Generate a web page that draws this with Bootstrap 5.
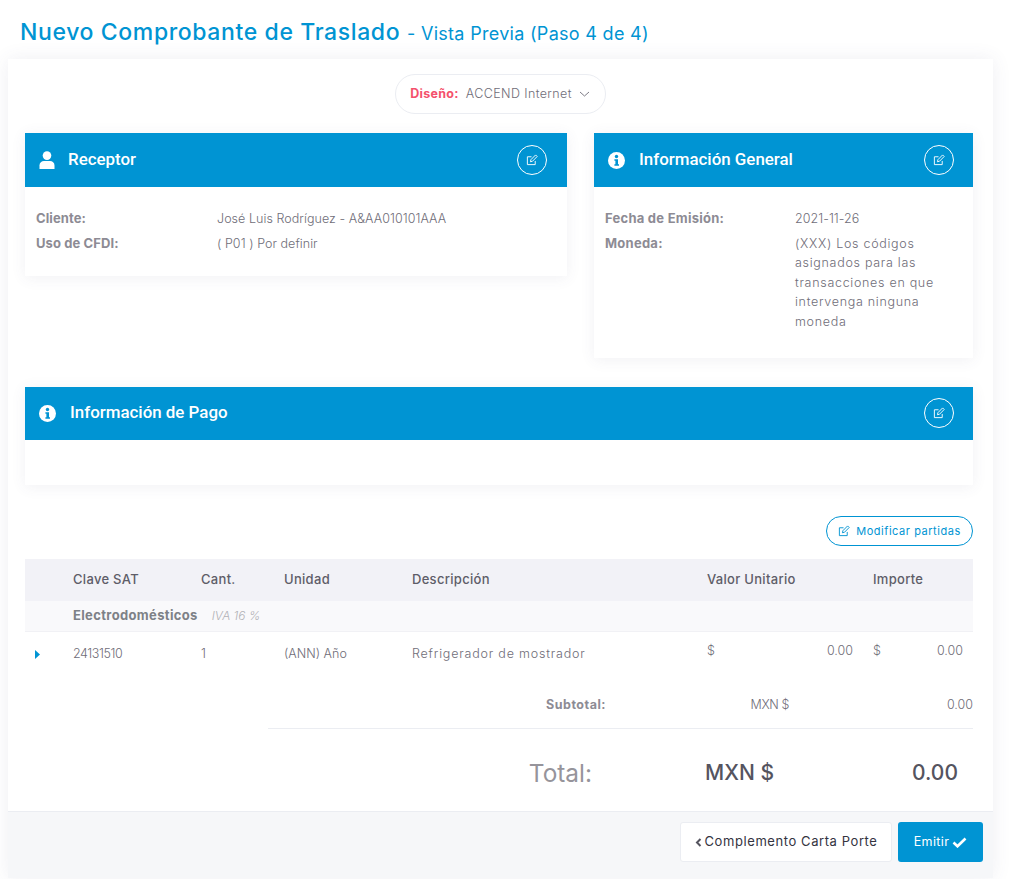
<!DOCTYPE html>
<html lang="es">
<head>
<meta charset="utf-8">
<title>Nuevo Comprobante de Traslado</title>
<link href="https://cdn.jsdelivr.net/npm/bootstrap@5.3.0/dist/css/bootstrap.min.css" rel="stylesheet">
<style>
html,body{height:879px;overflow:hidden}
body{background:#fff;font-family:"Inter","Open Sans",sans-serif;font-size:12.5px;color:#6f6d78;font-weight:300}
.page-head{margin:0;padding:17px 20px 12px;height:59px;font-size:23px;line-height:30px;font-weight:500;color:#0094d3;white-space:nowrap;letter-spacing:.62px}
.page-head small{font-size:18px;font-weight:400;letter-spacing:.3px}
.sheet{margin-left:8px;width:985px;height:819px;background:#fff;box-shadow:0 0 18px rgba(80,80,120,.09);border:0;border-radius:0;display:flex;flex-direction:column}
.sheet-main{padding:15px 20px 0 17px;flex:1 1 auto}
.pill-wrap{height:59px;padding-left:2px}
.design-pill{width:211px;height:40px;border:1px solid #ebedf2;border-radius:20px;color:#6f6d78;font-size:12.5px;gap:7px;background:#fff;letter-spacing:.4px}
.design-pill b{color:#f4516c;font-weight:700;letter-spacing:.3px}
.panel-row{gap:27px;margin-bottom:29px}
.panel{border:0;border-radius:0;box-shadow:0 2px 14px rgba(80,80,120,.08);background:#fff}
.panel-a{width:542px;height:143px}
.panel-b{width:379px;height:225px}
.panel-c{width:948px;height:98px}
.panel-head{background:#0094d3;color:#fff;border:0;border-radius:0!important;height:54px;padding:0 19px 0 14px;font-family:Roboto,sans-serif;font-size:16.9px;font-weight:500}
.panel-a .panel-head{padding-right:20px}
.panel-c .panel-head{height:53px;padding-bottom:1px}
.head-ico{margin-right:14px;flex:none}
.panel-a .head-ico{margin-right:13px}
.round-edit{width:30px;height:30px;border:1px solid #fff;border-radius:50%;padding:0;color:#fff;display:flex;align-items:center;justify-content:center}
.panel-body{padding:22px 11px 0}
.info-line{display:flex;line-height:19.5px;margin-bottom:5px;letter-spacing:.05px}
.info-line b{font-weight:700;color:#8d8b94;font-size:13px;letter-spacing:.1px}
.panel-a .info-line b{width:181px;flex:none}
.panel-b .info-line b{width:190px;flex:none}
.panel-b .info-line b{letter-spacing:.25px}
.wide-val{letter-spacing:.7px}
.tools{height:74px;padding-top:31px}
.mod-btn{width:147px;height:30px;border:1px solid #0094d3;border-radius:15px;color:#0094d3;font-size:11px;font-weight:400;padding:0;gap:6px;background:#fff;letter-spacing:.55px}
.items{table-layout:fixed;width:948px;margin:0;--bs-table-bg:transparent;color:#6f6d78;font-size:12.5px}
.items th,.items td{padding:0;border:0;vertical-align:middle}
.items thead th{background:#f2f2f7;height:42px;font-weight:500;color:#5e5d68;font-size:13px;letter-spacing:.3px}
.items .grp td{background:#f9f9fb;height:30px;border-bottom:1px solid #f1f1f5}
.grp b{font-weight:700;color:#7d8187;font-size:13px;margin-right:14px;letter-spacing:.35px}
.grp i{color:#b1b1b6;font-size:12px}
.items .item td{height:45px;color:#6f6d78;padding-top:1px;font-weight:300}
.items .item .code{letter-spacing:-.4px}
.items .item .desc{letter-spacing:.8px}
.tri{display:block;margin-left:10px}
.money{display:flex;justify-content:space-between;margin-top:-6px}
.money.val{padding-right:20px}
.money.imp{padding-right:10px}
.totals{margin-left:243px}
.sub-line{display:grid;grid-template-columns:338px 183px 184px;height:53px;padding-top:19px;border-bottom:1px solid #ebedf2;text-align:right;line-height:20px}
.sub-line b{color:#8d8b94;font-weight:700;letter-spacing:.5px}
.sub-line span:nth-child(2){letter-spacing:-.4px}
.total-line{display:grid;grid-template-columns:324px 182px 184px;padding-top:26px;text-align:right;font-size:21px;line-height:36px;font-weight:500;color:#55545f}
.total-line span:first-child{color:#96949b;font-weight:400;font-size:24.4px}
.sheet-foot{background:#f6f7f9;border-top:1px solid #ebedf2;height:67px;padding:10px 10px 0 0;gap:6px}
.back-btn{width:212px;height:40px;background:#fff;border:1px solid #ebedf2;color:#34343f;font-size:13px;font-weight:400;padding:0;gap:3px;border-radius:3px;letter-spacing:.58px}
.go-btn{width:85px;height:40px;background:#0094d3;border:0;color:#fff;font-size:12.5px;font-weight:400;padding:0;gap:3px;border-radius:3px;letter-spacing:.4px}
</style>
</head>
<body>
<h1 class="page-head">Nuevo Comprobante de Traslado <small>- Vista Previa (Paso 4 de 4)</small></h1>
<div class="card sheet">
  <div class="sheet-main">
    <div class="pill-wrap d-flex justify-content-center">
      <div class="design-pill d-flex align-items-center justify-content-center">
        <b>Diseño:</b><span>ACCEND Internet</span>
        <svg width="11" height="6" viewBox="0 0 11 6"><path d="M1 1l4.5 4L10 1" fill="none" stroke="#6f6d78" stroke-width=".9"/></svg>
      </div>
    </div>
    <div class="d-flex align-items-start panel-row">
      <div class="card panel panel-a">
        <div class="card-header panel-head d-flex align-items-center">
          <svg width="16" height="18" viewBox="0 0 16 18" class="head-ico"><circle cx="8" cy="4.6" r="4.3" fill="#fff"/><path d="M0.5 18v-3.6C.5 11.6 2.6 10 5 10h6c2.4 0 4.5 1.6 4.5 4.4V18z" fill="#fff"/></svg>
          <span class="flex-grow-1">Receptor</span>
          <span class="round-edit"><svg width="12" height="12" viewBox="0 0 13 13" fill="none" stroke="#fff" stroke-width="1"><path d="M10 7.5V11.5H1.5V3H6"/><path d="M4.8 8.4l.5-2.2L10.4 1l1.7 1.7L7 7.9z"/></svg></span>
        </div>
        <div class="panel-body">
          <div class="info-line"><b>Cliente:</b><span>José Luis Rodríguez - A&amp;AA010101AAA</span></div>
          <div class="info-line"><b>Uso de CFDI:</b><span>( P01 ) Por definir</span></div>
        </div>
      </div>
      <div class="card panel panel-b">
        <div class="card-header panel-head d-flex align-items-center">
          <svg width="17" height="17" viewBox="0 0 17 17" class="head-ico"><circle cx="8.5" cy="8.5" r="8.5" fill="#fff"/><circle cx="8.5" cy="4.5" r="1.7" fill="#0094d3"/><path d="M6.4 7.2h3.6v5h1v1.6H6.4v-1.6h1v-3.4h-1z" fill="#0094d3"/></svg>
          <span class="flex-grow-1">Información General</span>
          <span class="round-edit"><svg width="12" height="12" viewBox="0 0 13 13" fill="none" stroke="#fff" stroke-width="1"><path d="M10 7.5V11.5H1.5V3H6"/><path d="M4.8 8.4l.5-2.2L10.4 1l1.7 1.7L7 7.9z"/></svg></span>
        </div>
        <div class="panel-body">
          <div class="info-line"><b>Fecha de Emisión:</b><span>2021-11-26</span></div>
          <div class="info-line"><b>Moneda:</b><span class="wide-val">(XXX) Los códigos asignados para las transacciones en que intervenga ninguna moneda</span></div>
        </div>
      </div>
    </div>
    <div class="card panel panel-c">
      <div class="card-header panel-head d-flex align-items-center">
        <svg width="17" height="17" viewBox="0 0 17 17" class="head-ico"><circle cx="8.5" cy="8.5" r="8.5" fill="#fff"/><circle cx="8.5" cy="4.5" r="1.7" fill="#0094d3"/><path d="M6.4 7.2h3.6v5h1v1.6H6.4v-1.6h1v-3.4h-1z" fill="#0094d3"/></svg>
        <span class="flex-grow-1">Información de Pago</span>
        <span class="round-edit"><svg width="12" height="12" viewBox="0 0 13 13" fill="none" stroke="#fff" stroke-width="1"><path d="M10 7.5V11.5H1.5V3H6"/><path d="M4.8 8.4l.5-2.2L10.4 1l1.7 1.7L7 7.9z"/></svg></span>
      </div>
    </div>
    <div class="tools d-flex justify-content-end">
      <a class="btn mod-btn d-flex align-items-center justify-content-center" href="#">
        <svg width="12" height="12" viewBox="0 0 13 13" fill="none" stroke="#0094d3" stroke-width="1"><path d="M10 7.5V11.5H1.5V3H6"/><path d="M4.8 8.4l.5-2.2L10.4 1l1.7 1.7L7 7.9z"/></svg>
        Modificar partidas
      </a>
    </div>
    <table class="table items">
      <colgroup><col style="width:48px"><col style="width:128px"><col style="width:83px"><col style="width:128px"><col style="width:295px"><col style="width:166px"><col style="width:100px"></colgroup>
      <thead><tr><th></th><th>Clave SAT</th><th>Cant.</th><th>Unidad</th><th>Descripción</th><th>Valor Unitario</th><th>Importe</th></tr></thead>
      <tbody>
        <tr class="grp"><td></td><td colspan="6"><b>Electrodomésticos</b><i>IVA 16 %</i></td></tr>
        <tr class="item">
          <td><svg class="tri" width="5" height="9" viewBox="0 0 5 9"><path d="M0 0l5 4.5L0 9z" fill="#0094d3"/></svg></td>
          <td class="code">24131510</td><td>1</td><td>(ANN) Año</td><td class="desc">Refrigerador de mostrador</td>
          <td><div class="money val"><span>$</span><span>0.00</span></div></td>
          <td><div class="money imp"><span>$</span><span>0.00</span></div></td>
        </tr>
      </tbody>
    </table>
    <div class="totals">
      <div class="sub-line"><b>Subtotal:</b><span>MXN $</span><span>0.00</span></div>
      <div class="total-line"><span>Total:</span><span>MXN $</span><span>0.00</span></div>
    </div>
  </div>
  <div class="sheet-foot d-flex justify-content-end align-items-start">
    <a class="btn back-btn d-flex align-items-center justify-content-center" href="#">
      <svg width="7" height="9" viewBox="0 0 7 9"><path d="M5.5 1L2 4.5 5.5 8" fill="none" stroke="#55545f" stroke-width="2"/></svg>
      Complemento Carta Porte
    </a>
    <a class="btn go-btn d-flex align-items-center justify-content-center" href="#">
      Emitir
      <svg width="15" height="11" viewBox="0 0 15 11"><path d="M1.5 5.5L5.5 9.3 13.5 1.5" fill="none" stroke="#fff" stroke-width="2.6"/></svg>
    </a>
  </div>
</div>
<script src="https://cdn.jsdelivr.net/npm/bootstrap@5.3.0/dist/js/bootstrap.bundle.min.js"></script>
</body>
</html>
